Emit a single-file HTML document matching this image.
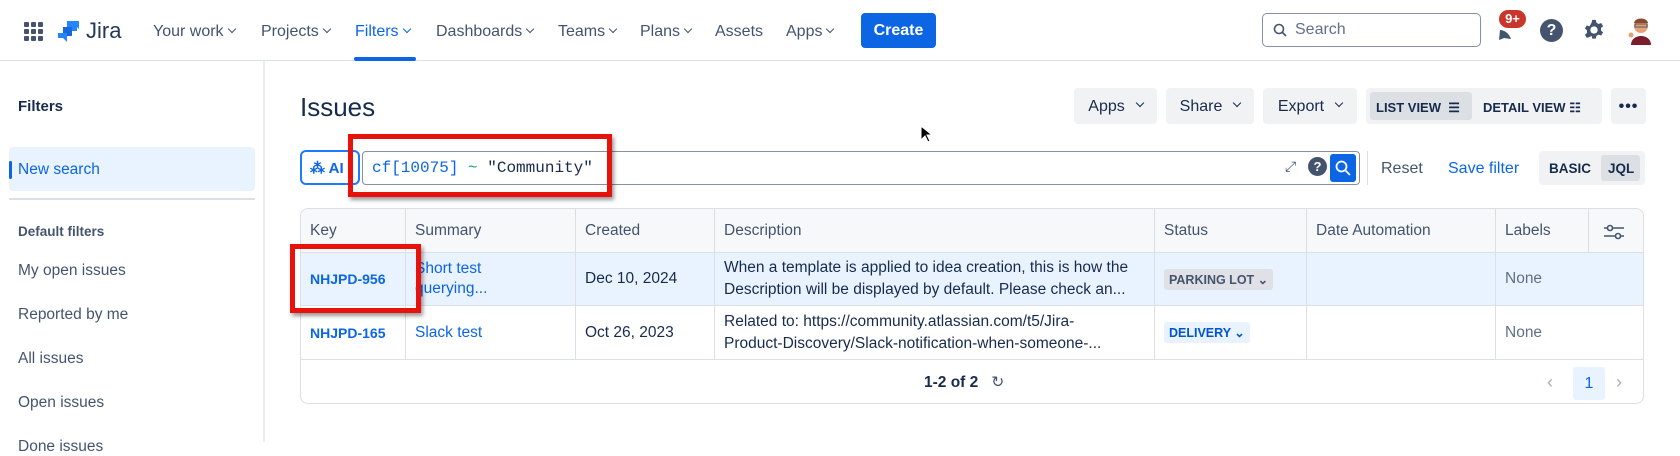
<!DOCTYPE html>
<html><head><meta charset="utf-8">
<style>
*{box-sizing:border-box;margin:0;padding:0}
body{width:1680px;height:442px;overflow:hidden;background:#fff;font-family:"Liberation Sans",sans-serif;color:#172b4d;position:relative;font-size:15px}
.a{position:absolute;white-space:nowrap}
.nav{position:absolute;left:0;top:0;width:1680px;height:61px;border-bottom:1px solid #dcdfe4}
.ni{position:absolute;top:23px;font-size:16px;color:#44546f}
.ch{display:inline-block;width:6px;height:6px;border-right:1.8px solid currentColor;border-bottom:1.8px solid currentColor;transform:rotate(45deg);margin-left:5px;position:relative;top:-4px}
.btn{position:absolute;background:#f1f2f4;border-radius:4px;font-size:16px;color:#172b4d;display:flex;align-items:center;justify-content:center;padding-top:2px}
.side{position:absolute;left:0;top:61px;width:265px;height:381px;border-right:2px solid #ebecf0}
.si{position:absolute;left:18px;font-size:15.5px;color:#44546f}
.tbl{position:absolute;left:300px;top:208px;width:1344px;height:196px;border:1px solid #dcdfe4;border-radius:8px;overflow:hidden}
.th{position:absolute;top:0;height:44px;border-right:1px solid #dcdfe4;border-bottom:1px solid #dcdfe4;padding:13px 9px;font-size:15.5px;color:#44546f;background:#f7f8f9}
.td{position:absolute;border-right:1px solid #dcdfe4;border-bottom:1px solid #dcdfe4;font-size:15.5px;padding:0 9px;display:flex;align-items:center}
.k{color:#0c66e4;font-weight:bold;font-size:14px}
.l{color:#0c66e4}
.lz{position:absolute;background:#dfe1e6;border-radius:3px;font-size:12.5px;font-weight:bold;padding:3px 5px;top:16px;left:9px}
.red{position:absolute;border:5px solid #e8120c;box-shadow:2px 3px 4px rgba(0,0,0,.4)}
</style></head><body>
<div class="nav">
  <svg class="a" style="left:24px;top:22px" width="19" height="19" viewBox="0 0 19 19" fill="#44546f"><rect x="0" y="0" width="5" height="5" rx="1"/><rect x="7" y="0" width="5" height="5" rx="1"/><rect x="14" y="0" width="5" height="5" rx="1"/><rect x="0" y="7" width="5" height="5" rx="1"/><rect x="7" y="7" width="5" height="5" rx="1"/><rect x="14" y="7" width="5" height="5" rx="1"/><rect x="0" y="14" width="5" height="5" rx="1"/><rect x="7" y="14" width="5" height="5" rx="1"/><rect x="14" y="14" width="5" height="5" rx="1"/></svg>
  <svg class="a" style="left:57px;top:19px" width="22" height="24" viewBox="0 0 22 24"><path d="M10 2h10v10l-10 0z M20 2 10 12" fill="#2684ff"/><path d="M14 2h8v8z" fill="#2684ff"/><path d="M6 8h9v9H6z" fill="#1868db"/><path d="M1 14h9v9l-4-4-5 0z" fill="#2684ff"/></svg>
  <div class="a" style="left:86px;top:18px;font-size:22px;color:#253858">Jira</div>
  <div class="ni" style="left:153px">Your work<span class="ch"></span></div>
  <div class="ni" style="left:261px">Projects<span class="ch"></span></div>
  <div class="ni" style="left:355px;color:#0c66e4">Filters<span class="ch"></span></div>
  <div class="a" style="left:354px;top:57px;width:62px;height:4px;background:#0c66e4;border-radius:2px"></div>
  <div class="ni" style="left:436px">Dashboards<span class="ch"></span></div>
  <div class="ni" style="left:558px">Teams<span class="ch"></span></div>
  <div class="ni" style="left:640px">Plans<span class="ch"></span></div>
  <div class="ni" style="left:715px">Assets</div>
  <div class="ni" style="left:786px">Apps<span class="ch"></span></div>
  <div class="a" style="left:861px;top:13px;width:75px;height:35px;background:#0c66e4;border-radius:4px;color:#fff;font-size:16px;font-weight:bold;text-align:center;line-height:36px">Create</div>
  <div class="a" style="left:1262px;top:13px;width:219px;height:34px;border:1.5px solid #8590a2;border-radius:5px"></div>
  <svg class="a" style="left:1273px;top:23px" width="14" height="14" viewBox="0 0 14 14" fill="none" stroke="#44546f" stroke-width="1.6"><circle cx="6" cy="6" r="4.5"/><path d="M9.5 9.5 13 13"/></svg>
  <div class="a" style="left:1295px;top:21px;font-size:16px;color:#626f86">Search</div>
  <svg class="a" style="left:1497px;top:24px" width="20" height="18" viewBox="0 0 20 18"><path d="M3 6c4 0 9 3 11 9l-7-1-5 2z" fill="#44546f"/></svg>
  <div class="a" style="left:1499px;top:10px;width:27px;height:18px;background:#c9372c;border-radius:9px;color:#fff;font-size:13px;font-weight:bold;text-align:center;line-height:18px">9+</div>
  <div class="a" style="left:1540px;top:19px;width:23px;height:23px;background:#44546f;border-radius:50%;color:#fff;font-weight:bold;font-size:16px;text-align:center;line-height:23px">?</div>
  <svg class="a" style="left:1583px;top:19px" width="22" height="22" viewBox="0 0 24 24"><path fill="#44546f" d="M10 1h4l.6 3 2.4 1.4 2.9-1 2 3.4-2.3 2a7 7 0 0 1 0 2.8l2.3 2-2 3.4-2.9-1-2.4 1.4-.6 3h-4l-.6-3L7 19.6l-2.9 1-2-3.4 2.3-2a7 7 0 0 1 0-2.8l-2.3-2 2-3.4 2.9 1L9.4 4z"/><circle cx="12" cy="12" r="4" fill="#fff"/></svg>
  <svg class="a" style="left:1627px;top:15px" width="28" height="30" viewBox="0 0 28 30"><circle cx="14" cy="11" r="7" fill="#e8a27a"/><path d="M7 8c1-6 13-6 14 0z" fill="#8a4a2a"/><rect x="8" y="9" width="12" height="3" fill="none" stroke="#555" stroke-width="1"/><path d="M4 30c0-6 5-9 10-9s10 3 10 9z" fill="#7a1e2e"/><circle cx="4" cy="20" r="2.5" fill="#e8a27a"/></svg>
</div>
<div class="side">
  <div class="si" style="top:37px;color:#172b4d;font-weight:bold;font-size:15px">Filters</div>
  <div class="a" style="left:9px;top:86px;width:246px;height:44px;background:#e9f2ff;border-radius:4px"></div>
  <div class="a" style="left:9px;top:100px;width:3px;height:18px;background:#0c66e4;border-radius:2px"></div>
  <div class="si" style="top:100px;color:#0c66e4">New search</div>
  <div class="a" style="left:9px;top:137px;width:246px;height:2px;background:#dcdfe4"></div>
  <div class="si" style="top:163px;font-size:13.5px;font-weight:bold;color:#44546f">Default filters</div>
  <div class="si" style="top:201px">My open issues</div>
  <div class="si" style="top:245px">Reported by me</div>
  <div class="si" style="top:289px">All issues</div>
  <div class="si" style="top:333px">Open issues</div>
  <div class="si" style="top:377px">Done issues</div>
</div>
<div class="a" style="left:300px;top:92px;font-size:26px;color:#172b4d">Issues</div>
<div class="btn" style="left:1074px;top:88px;width:83px;height:36px">Apps<span class="ch" style="margin-left:12px"></span></div>
<div class="btn" style="left:1166px;top:88px;width:88px;height:36px">Share<span class="ch" style="margin-left:12px"></span></div>
<div class="btn" style="left:1263px;top:88px;width:94px;height:36px">Export<span class="ch" style="margin-left:12px"></span></div>
<div class="btn" style="left:1366px;top:88px;width:236px;height:36px;justify-content:flex-start"></div>
<div class="a" style="left:1370px;top:92px;width:102px;height:28px;background:#dcdfe4;border-radius:3px"></div>
<div class="a" style="left:1376px;top:100px;font-size:13px;font-weight:bold;color:#172b4d">LIST VIEW &nbsp;☰</div>
<div class="a" style="left:1483px;top:100px;font-size:13px;font-weight:bold;color:#172b4d">DETAIL VIEW ☷</div>
<div class="btn" style="left:1611px;top:88px;width:35px;height:36px;font-weight:bold;letter-spacing:1px">•••</div>
<div class="a" style="left:300px;top:150px;width:60px;height:35px;border:2px solid #1d7afc;border-radius:6px"></div>
<div class="a" style="left:310px;top:159px;font-size:15px;color:#0c66e4;font-weight:bold">⁂ AI</div>
<div class="a" style="left:362px;top:151px;width:998px;height:34px;border:1px solid #8590a2;border-radius:4px;background:#fff"></div>
<div class="a" style="left:372px;top:159px;font-family:'Liberation Mono',monospace;font-size:16px"><span style="color:#0c66e4">cf[10075]</span> <span style="color:#22a06b">~</span> "Community"</div>
<div class="a" style="left:1285px;top:158px;font-size:14px;color:#44546f">⤢</div>
<div class="a" style="left:1308px;top:157px;width:19px;height:19px;border-radius:50%;background:#44546f;color:#fff;font-size:13px;font-weight:bold;text-align:center;line-height:19px">?</div>
<div class="a" style="left:1330px;top:154px;width:26px;height:28px;background:#0c66e4;border-radius:3px"></div>
<svg class="a" style="left:1335px;top:160px" width="16" height="16" viewBox="0 0 16 16" fill="none" stroke="#fff" stroke-width="1.8"><circle cx="6.5" cy="6.5" r="5"/><path d="M10.5 10.5 15 15"/></svg>
<div class="a" style="left:1367px;top:151px;width:1px;height:34px;background:#dcdfe4"></div>
<div class="a" style="left:1381px;top:160px;font-size:16px;color:#44546f">Reset</div>
<div class="a" style="left:1448px;top:160px;font-size:16px;color:#0c66e4">Save filter</div>
<div class="btn" style="left:1539px;top:151px;width:106px;height:34px"></div>
<div class="a" style="left:1601px;top:155px;width:39px;height:26px;background:#dcdfe4;border-radius:3px"></div>
<div class="a" style="left:1549px;top:161px;font-size:13.5px;font-weight:bold">BASIC</div>
<div class="a" style="left:1608px;top:161px;font-size:13.5px;font-weight:bold">JQL</div>
<div class="red" style="left:348px;top:134px;width:264px;height:63px"></div>
<div class="tbl">
  <div class="a" style="left:0;top:44px;width:1344px;height:53px;background:#e9f2ff"></div>
  <div class="th" style="left:0;width:105px">Key</div>
  <div class="th" style="left:105px;width:170px">Summary</div>
  <div class="th" style="left:275px;width:139px">Created</div>
  <div class="th" style="left:414px;width:440px">Description</div>
  <div class="th" style="left:854px;width:152px">Status</div>
  <div class="th" style="left:1006px;width:189px">Date Automation</div>
  <div class="th" style="left:1195px;width:93px">Labels</div>
  <div class="th" style="left:1288px;width:56px;border-right:none"><svg width="24" height="20" viewBox="0 0 24 20" fill="none" stroke="#44546f" stroke-width="1.6" style="margin-left:4px"><path d="M2 6h20M2 14h20"/><circle cx="8" cy="6" r="2.5" fill="#f7f8f9"/><circle cx="16" cy="14" r="2.5" fill="#f7f8f9"/></svg></div>
  <div class="td k" style="left:0;top:44px;width:105px;height:53px">NHJPD-956</div>
  <div class="td l" style="left:105px;top:44px;width:170px;height:53px;line-height:20px">Short test<br>querying...</div>
  <div class="td" style="left:275px;top:44px;width:139px;height:53px">Dec 10, 2024</div>
  <div class="td" style="left:414px;top:44px;width:440px;height:53px;line-height:22px">When a template is applied to idea creation, this is how the<br>Description will be displayed by default. Please check an...</div>
  <div class="td" style="left:854px;top:44px;width:152px;height:53px"><span class="lz" style="color:#44546f">PARKING LOT ⌄</span></div>
  <div class="td" style="left:1006px;top:44px;width:189px;height:53px"></div>
  <div class="td" style="left:1195px;top:44px;width:149px;height:53px;color:#626f86;border-right:none">None</div>
  <div class="td k" style="left:0;top:97px;width:105px;height:54px">NHJPD-165</div>
  <div class="td l" style="left:105px;top:97px;width:170px;height:54px">Slack test</div>
  <div class="td" style="left:275px;top:97px;width:139px;height:54px">Oct 26, 2023</div>
  <div class="td" style="left:414px;top:97px;width:440px;height:54px;line-height:22px">Related to: https://community.atlassian.com/t5/Jira-<br>Product-Discovery/Slack-notification-when-someone-...</div>
  <div class="td" style="left:854px;top:97px;width:152px;height:54px"><span class="lz" style="background:#e9f2ff;color:#0055cc">DELIVERY ⌄</span></div>
  <div class="td" style="left:1006px;top:97px;width:189px;height:54px"></div>
  <div class="td" style="left:1195px;top:97px;width:149px;height:54px;color:#626f86;border-right:none">None</div>
  <div class="a" style="left:623px;top:164px;font-size:15.5px;font-weight:bold;color:#172b4d">1-2 of 2 &nbsp; <span style="font-weight:normal;color:#44546f">↻</span></div>
  <div class="a" style="left:1246px;top:163px;font-size:18px;color:#a5adba">‹</div>
  <div class="a" style="left:1272px;top:158px;width:32px;height:33px;background:#e9f2ff;border-radius:3px;color:#0c66e4;text-align:center;line-height:33px;font-size:16px">1</div>
  <div class="a" style="left:1315px;top:163px;font-size:18px;color:#a5adba">›</div>
</div>
<div class="red" style="left:290px;top:244px;width:131px;height:69px"></div>
<svg class="a" style="left:920px;top:125px" width="12" height="18" viewBox="0 0 12 18"><path d="M1 1v14l4-4 3 6 2-1-3-6h5z" fill="#000" stroke="#fff" stroke-width="1"/></svg>
</body></html>
